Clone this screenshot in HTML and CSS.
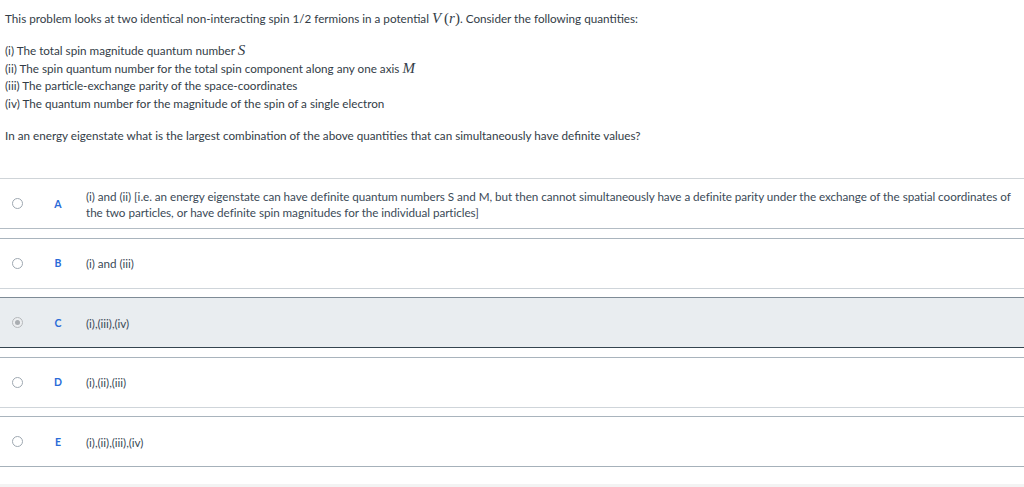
FILE: index.html
```html
<!DOCTYPE html>
<html>
<head>
<meta charset="utf-8">
<link rel="stylesheet" href="styles.css">
</head>
<body>
<div class="page">
  <div class="question">
    <p class="intro">This problem looks at two identical non-interacting spin 1/2 fermions in a potential <span class="math"><i>V</i>&thinsp;(<i>r</i>)</span>. Consider the following quantities:</p>
    <div class="items">
      <div>(i) The total spin magnitude quantum number <i class="math">S</i></div>
      <div>(ii) The spin quantum number for the total spin component along any one axis <i class="math">M</i></div>
      <div>(iii) The particle-exchange parity of the space-coordinates</div>
      <div>(iv) The quantum number for the magnitude of the spin of a single electron</div>
    </div>
    <p class="ask">In an energy eigenstate what is the largest combination of the above quantities that can simultaneously have definite values?</p>
  </div>
  <div class="options">
    <div class="option">
      <span class="radio"></span>
      <span class="letter">A</span>
      <span class="text">(i) and (ii) [i.e. an energy eigenstate can have definite quantum numbers S and M, but then cannot simultaneously have a definite parity under the exchange of the spatial coordinates of the two particles, or have definite spin magnitudes for the individual particles]</span>
    </div>
    <div class="option">
      <span class="radio"></span>
      <span class="letter">B</span>
      <span class="text">(i) and (iii)</span>
    </div>
    <div class="option selected">
      <span class="radio checked"></span>
      <span class="letter">C</span>
      <span class="text">(i),(iii),(iv)</span>
    </div>
    <div class="option">
      <span class="radio"></span>
      <span class="letter">D</span>
      <span class="text">(i),(ii),(iii)</span>
    </div>
    <div class="option last">
      <span class="radio"></span>
      <span class="letter">E</span>
      <span class="text">(i),(ii),(iii),(iv)</span>
    </div>
  </div>
  <div class="footer"></div>
</div>
</body>
</html>
```
FILE: styles.css
```css
html, body {
  margin: 0;
  padding: 0;
  background: #fff;
}
.page {
  font-family: Lato, "Open Sans", sans-serif;
  font-size: 11.7px;
  color: #333d47;
  width: 1024px;
}
.question {
  padding: 9px 5px 0 5px;
}
.question p {
  margin: 0;
  line-height: 18px;
}
.items {
  margin-top: 15px;
  line-height: 17.5px;
}
.ask {
  margin-top: 14px !important;
}
.math {
  font-family: "Liberation Serif", serif;
  font-size: 15px;
  line-height: 10px;
}
.options {
  margin-top: 34px;
  display: flex;
  flex-direction: column;
  gap: 8.5px;
}
.option {
  display: flex;
  align-items: center;
  min-height: 49px;
  border-top: 1px solid #cfd4d8;
  border-bottom: 1px solid #b3bcc4;
  color: #3b4a57;
}
.option + .option {
  border-top-color: #a9b4bd;
  border-bottom-color: #cfd5da;
}
.option.selected {
  background: #e9edf0;
  border-top-color: #7e8b96;
  border-bottom-color: #34444f;
}
.option.last {
  border-bottom-color: #a6b1ba;
}
.radio {
  flex: none;
  width: 9px;
  height: 9px;
  border: 1px solid #9ea8b1;
  border-radius: 50%;
  margin-left: 12px;
  background: #fff;
  box-sizing: content-box;
  position: relative;
}
.radio.checked {
  border-color: #b5b8bb;
  background: #eceef0;
}
.radio.checked::after {
  content: "";
  position: absolute;
  left: 2px;
  top: 2px;
  width: 5px;
  height: 5px;
  border-radius: 50%;
  background: #a9adb1;
}
.letter {
  flex: none;
  width: 10px;
  margin-left: 30px;
  font-weight: bold;
  color: #2a6bd8;
  font-size: 10.5px;
  text-align: center;
}
.text {
  margin-left: 23px;
  line-height: 16px;
  letter-spacing: -0.05px;
}
.footer {
  margin-top: 17px;
  height: 10px;
  background: #f3f3f3;
}
```
